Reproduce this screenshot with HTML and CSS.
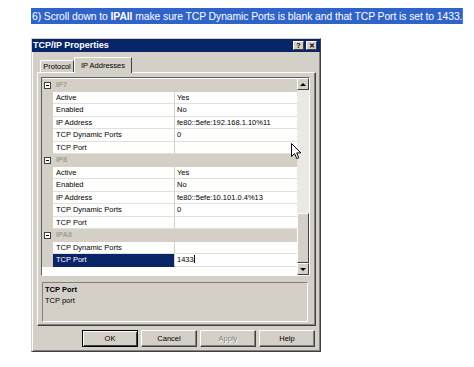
FILE: index.html
```html
<!DOCTYPE html>
<html lang="en">
<head>
    <meta charset="UTF-8">
    <title>TCP/IP Properties</title>
    <link rel="stylesheet" href="styles.css">
</head>
<body>
    <p class="step"><span>6) Scroll down to <b>IPAll</b> make sure TCP Dynamic Ports is blank and that TCP Port is set to 1433.</span></p>

    <div class="dialog">
        <div class="titlebar">
            <span>TCP/IP Properties</span>
            <div class="tbtns"><span class="tbtn">?</span><span class="tbtn">&#x2715;</span></div>
        </div>

        <div class="tabs">
            <span class="tab tab-protocol">Protocol</span>
            <span class="tab tab-ip active">IP Addresses</span>
        </div>

        <div class="panel">
            <div class="grid">
                <div class="rows">
                    <div class="row cat"><span class="gut"><i class="box"></i></span><span class="label">IP7</span></div>
                    <div class="row"><span class="gut"></span><span class="name">Active</span><span class="val">Yes</span></div>
                    <div class="row"><span class="gut"></span><span class="name">Enabled</span><span class="val">No</span></div>
                    <div class="row"><span class="gut"></span><span class="name">IP Address</span><span class="val">fe80::5efe:192.168.1.10%11</span></div>
                    <div class="row"><span class="gut"></span><span class="name">TCP Dynamic Ports</span><span class="val">0</span></div>
                    <div class="row"><span class="gut"></span><span class="name">TCP Port</span><span class="val"></span></div>
                    <div class="row cat"><span class="gut"><i class="box"></i></span><span class="label">IP8</span></div>
                    <div class="row"><span class="gut"></span><span class="name">Active</span><span class="val">Yes</span></div>
                    <div class="row"><span class="gut"></span><span class="name">Enabled</span><span class="val">No</span></div>
                    <div class="row"><span class="gut"></span><span class="name">IP Address</span><span class="val">fe80::5efe:10.101.0.4%13</span></div>
                    <div class="row"><span class="gut"></span><span class="name">TCP Dynamic Ports</span><span class="val">0</span></div>
                    <div class="row"><span class="gut"></span><span class="name">TCP Port</span><span class="val"></span></div>
                    <div class="row cat"><span class="gut"><i class="box"></i></span><span class="label">IPAll</span></div>
                    <div class="row"><span class="gut"></span><span class="name">TCP Dynamic Ports</span><span class="val"></span></div>
                    <div class="row selected"><span class="gut"></span><span class="name">TCP Port</span><span class="val">1433<i class="caret"></i></span></div>
                </div>
                <div class="scroll">
                    <span class="sbtn"><i class="arrow-up"></i></span>
                    <div class="track"><span class="thumb"></span></div>
                    <span class="sbtn"><i class="arrow-down"></i></span>
                </div>
            </div>

            <div class="desc">
                <b>TCP Port</b>
                <span>TCP port</span>
            </div>
        </div>

        <div class="buttons">
            <span class="btn default">OK</span>
            <span class="btn">Cancel</span>
            <span class="btn disabled">Apply</span>
            <span class="btn">Help</span>
        </div>
    </div>

    <svg class="pointer" width="12" height="17" viewBox="0 0 12 17">
        <path d="M0.5 0.5 L0.5 13.5 L3.6 10.6 L5.8 15.6 L7.8 14.8 L5.7 9.9 L9.8 9.9 Z" fill="#fff" stroke="#000" stroke-width="1"/>
    </svg>
</body>
</html>
```

FILE: styles.css
```css
body { margin: 0; background: #fff; font-family: "Liberation Sans", Arial, sans-serif; position: relative; }

.step { margin: 0; padding: 8px 0 0 31px; height: 16px; font: 11px/16px "Liberation Sans", Arial, sans-serif; white-space: nowrap; }
.step span { display: inline-block; background: #2f63c9; color: #fff; padding: 0 1px; transform: scaleX(0.945); transform-origin: left top; letter-spacing: -0.1px; }

/* dialog frame */
.dialog { width: 290px; height: 314px; margin: 14px 0 0 31px; box-sizing: border-box; background: #d4d0c8; border: 1px solid; border-color: #d4d0c8 #404040 #404040 #d4d0c8; box-shadow: inset 1px 1px #fff, inset -1px -1px #808080; font-size: 7.5px; color: #000; }

.titlebar { height: 13px; background: #0a246a; color: #fff; font: bold 9px/13px "Liberation Sans", Arial, sans-serif; display: flex; justify-content: space-between; align-items: center; padding: 0 3px 0 1px; }
.tbtns { display: flex; gap: 2px; }
.tbtn { width: 11px; height: 9px; box-sizing: border-box; background: #d4d0c8; color: #000; border: 1px solid; border-color: #fff #404040 #404040 #fff; font: bold 7px/7px "Liberation Sans", Arial, sans-serif; display: flex; align-items: center; justify-content: center; }

/* tabs */
.tabs { height: 20px; display: flex; align-items: flex-end; padding-left: 8px; }
.tab { height: 12px; box-sizing: border-box; border: 1px solid; border-bottom: none; border-color: #fff #404040 #404040 #fff; display: flex; align-items: center; justify-content: center; background: #d4d0c8; }
.tab-protocol { width: 34px; }
.tab-ip { width: 58px; }
.tab.active { height: 16px; margin-bottom: -1px; position: relative; z-index: 1; }

.panel { margin-left: 5px; width: 279px; height: 254px; box-sizing: border-box; border: 1px solid; border-color: #fff #404040 #404040 #fff; box-shadow: inset -1px -1px #808080; padding: 4px 0 0 3px; }

/* property grid */
.grid { width: 269px; height: 199px; box-sizing: border-box; border: 1px solid; border-color: #606060 #fff #fff #606060; background: #fff; display: flex; }
.rows { flex: 1; padding-top: 1px; }
.row { height: 12.5px; display: flex; line-height: 12px; }
.gut { width: 11px; flex: none; background: #d4d0c8; display: flex; align-items: center; justify-content: center; }
.name { width: 118px; flex: none; padding-left: 3px; border-right: 1px solid #d4d0c8; border-bottom: 1px solid #e2e0da; white-space: nowrap; overflow: hidden; }
.val { flex: 1; padding-left: 2px; border-bottom: 1px solid #e2e0da; white-space: nowrap; }
.cat { background: #d4d0c8; }
.cat .label { padding-left: 3px; color: #a29e96; font-weight: bold; }
.box { width: 7px; height: 7px; box-sizing: border-box; border: 1px solid #404040; background: #fff; position: relative; }
.box::after { content: ""; position: absolute; left: 1px; top: 2px; width: 3px; height: 1px; background: #000; }
.selected .name { background: #0a246a; color: #fff; border-bottom-color: #0a246a; }
.caret { display: inline-block; width: 1px; height: 8px; background: #000; vertical-align: -1px; }

.scroll { width: 12px; background: #ebe9e4; display: flex; flex-direction: column; }
.sbtn { height: 12px; box-sizing: border-box; background: #d4d0c8; border: 1px solid; border-color: #fff #404040 #404040 #fff; display: flex; align-items: center; justify-content: center; }
.track { flex: 1; display: flex; flex-direction: column; justify-content: flex-end; }
.thumb { height: 50px; box-sizing: border-box; background: #d4d0c8; border: 1px solid; border-color: #fff #404040 #404040 #fff; }
.arrow-up { border: 3px solid transparent; border-bottom-color: #000; border-top: none; }
.arrow-down { border: 3px solid transparent; border-top-color: #000; border-bottom: none; }

.desc { margin: 6px 0 0 1px; width: 266px; height: 40px; box-sizing: border-box; border: 1px solid; border-color: #808080 #fff #fff #808080; padding: 1px 2px; display: flex; flex-direction: column; line-height: 11px; }

/* dialog buttons */
.buttons { display: flex; justify-content: flex-end; gap: 3px; padding: 4px 5px 0 0; }
.btn { width: 56px; height: 17px; box-sizing: border-box; border: 1px solid; border-color: #fff #404040 #404040 #fff; box-shadow: inset -1px -1px #808080; display: flex; align-items: center; justify-content: center; }
.btn.default { border-color: #000; box-shadow: inset 1px 1px #fff, inset -1px -1px #404040; }
.btn.disabled { color: #808080; text-shadow: 1px 1px #fff; }

.pointer { position: absolute; left: 291px; top: 143px; }
```
